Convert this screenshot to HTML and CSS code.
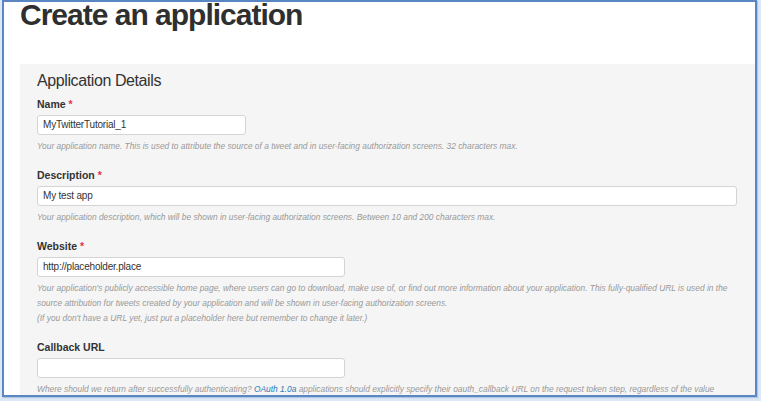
FILE: index.html
```html
<!DOCTYPE html>
<html lang="en">
<head>
<meta charset="utf-8">
<title>Create an application</title>
<link rel="stylesheet" href="styles.css">
</head>
<body>
<div class="frame">
  <div class="page">
    <h1 class="title">Create an application</h1>
    <section class="panel">
      <h2 class="panel-title">Application Details</h2>

      <div class="field">
        <label class="label">Name <span class="req">*</span></label>
        <div class="input input-name">MyTwitterTutorial_1</div>
        <p class="help">Your application name. This is used to attribute the source of a tweet and in user-facing authorization screens. 32 characters max.</p>
      </div>

      <div class="field">
        <label class="label">Description <span class="req">*</span></label>
        <div class="input input-wide">My test app</div>
        <p class="help">Your application description, which will be shown in user-facing authorization screens. Between 10 and 200 characters max.</p>
      </div>

      <div class="field">
        <label class="label">Website <span class="req">*</span></label>
        <div class="input input-mid">http://placeholder.place</div>
        <p class="help">Your application's publicly accessible home page, where users can go to download, make use of, or find out more information about your application. This fully-qualified URL is used in the source attribution for tweets created by your application and will be shown in user-facing authorization screens.<br>(If you don't have a URL yet, just put a placeholder here but remember to change it later.)</p>
      </div>

      <div class="field">
        <label class="label">Callback URL</label>
        <div class="input input-mid"></div>
        <p class="help">Where should we return after successfully authenticating? <a class="link" href="#">OAuth 1.0a</a> applications should explicitly specify their oauth_callback URL on the request token step, regardless of the value</p>
      </div>
    </section>
  </div>
</div>
</body>
</html>
```

FILE: styles.css
```css
html, body {
  margin: 0;
  padding: 0;
  background: #dde8f6;
  overflow: hidden;
}

body {
  width: 761px;
  height: 401px;
  font-family: "Liberation Sans", Arial, sans-serif;
  color: #333;
}

.frame {
  margin: 0 0 0 2px;
  width: 751px;
  height: 393px;
  border: 2px solid #5b86c4;
  background: #fff;
  overflow: hidden;
  box-shadow: 1px 1px 1px rgba(60, 100, 160, 0.25);
}

.page {
  padding-left: 16px;
}

.title {
  margin: 0;
  padding-top: 1px;
  font-size: 30px;
  line-height: 24px;
  font-weight: bold;
  letter-spacing: -1px;
  color: #2f2f2f;
  height: 61px;
}

.panel {
  background: #f5f5f5;
  padding: 6px 0 0 17px;
  height: 340px;
}

.panel-title {
  margin: 0 0 5px 0;
  font-size: 16px;
  line-height: 22px;
  font-weight: normal;
  letter-spacing: -0.4px;
  color: #333;
}

.field {
  margin-bottom: 14px;
}

.label {
  display: block;
  font-size: 10.5px;
  line-height: 14px;
  font-weight: bold;
  color: #333;
  margin-bottom: 4px;
}

.req {
  color: #e0334d;
}

.input {
  box-sizing: border-box;
  height: 20px;
  border: 1px solid #d4d4d4;
  border-radius: 3px;
  background: #fff;
  padding: 0 5px;
  font-size: 10px;
  line-height: 18px;
  letter-spacing: -0.2px;
  color: #333;
}

.input-name { width: 209px; }
.input-wide { width: 700px; }
.input-mid { width: 308px; }

.help {
  margin: 4px 0 0 0;
  font-size: 8.4px;
  line-height: 15px;
  font-style: italic;
  color: #999;
  width: 700px;
}

.link {
  color: #2b7bb9;
  text-decoration: none;
}
```
